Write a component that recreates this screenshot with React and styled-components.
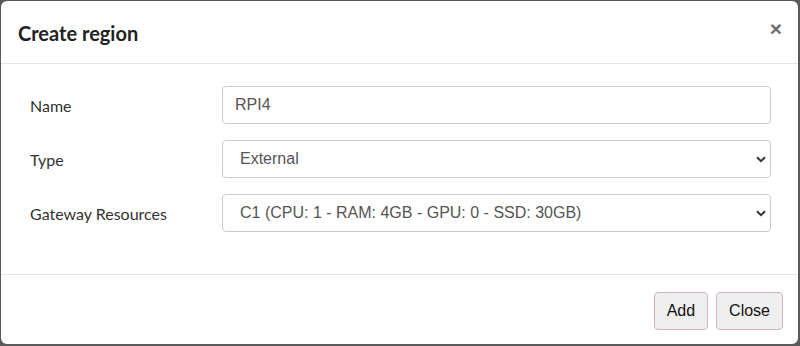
import React from "react";
import styled, { createGlobalStyle } from "styled-components";

const GlobalStyle = createGlobalStyle`
  html, body {
    margin: 0;
    padding: 0;
    background: #5a5a5a;
  }
  body {
    font-family: "Lato", "Liberation Sans", sans-serif;
  }
`;

const Backdrop = styled.div`
  width: 800px;
  height: 346px;
  padding: 1px 2px 2px 1px;
  box-sizing: border-box;
  background: #5a5a5a;
`;

const Modal = styled.div`
  height: 100%;
  background: #fff;
  border-radius: 6px;
  display: flex;
  flex-direction: column;
`;

const Header = styled.div`
  display: flex;
  align-items: center;
  justify-content: space-between;
  height: 62px;
  padding: 0 16px 0 17px;
  border-bottom: 1px solid #e5e5e5;
`;

const Title = styled.h4`
  margin: 0;
  font-family: "Lato", sans-serif;
  font-weight: 700;
  font-size: 20px;
  color: #222;
  padding-top: 1px;
`;

const CloseX = styled.button`
  border: none;
  background: none;
  padding: 0;
  font-family: "Liberation Sans", Arial, sans-serif;
  font-weight: 700;
  font-size: 21px;
  color: #6e6e6e;
  line-height: 1;
  margin-top: -8px;
  cursor: pointer;
`;

const Body = styled.div`
  flex: 1;
  padding: 22px 27px 0 29px;
  display: flex;
  flex-direction: column;
  gap: 16px;
`;

const Row = styled.div`
  display: grid;
  grid-template-columns: 192px 1fr;
  align-items: center;
`;

const Label = styled.label`
  font-family: "Lato", sans-serif;
  font-size: 16px;
  color: #333;
`;

const Field = styled.div`
  height: 38px;
  box-sizing: border-box;
  border: 1px solid #ccc;
  border-radius: 4px;
  display: flex;
  align-items: center;
  justify-content: space-between;
  padding: 0 ${p => (p.select ? "4px" : "12px")} 0 ${p => (p.select ? "17px" : "12px")};
  font-family: "Liberation Sans", Arial, sans-serif;
  font-size: 16px;
  color: #555;
`;

const Chevron = () => (
  <svg width="10" height="7" viewBox="0 0 10 7">
    <path d="M1 1.2 L5 5.2 L9 1.2" fill="none" stroke="#333" strokeWidth="2" />
  </svg>
);

const Footer = styled.div`
  height: 70px;
  box-sizing: border-box;
  border-top: 1px solid #e5e5e5;
  display: flex;
  align-items: center;
  justify-content: flex-end;
  gap: 8px;
  padding: 3px 15px 0 0;
`;

const Button = styled.button`
  height: 38px;
  padding: 0 12px;
  background: #efefef;
  border: 1px solid #cbb9b9;
  border-radius: 4px;
  font-family: "Liberation Sans", Arial, sans-serif;
  font-size: 16px;
  color: #111;
`;

export default function App() {
  return (
    <Backdrop>
      <GlobalStyle />
      <Modal>
        <Header>
          <Title>Create region</Title>
          <CloseX>×</CloseX>
        </Header>
        <Body>
          <Row>
            <Label>Name</Label>
            <Field>RPI4</Field>
          </Row>
          <Row>
            <Label>Type</Label>
            <Field select>
              <span>External</span>
              <Chevron />
            </Field>
          </Row>
          <Row>
            <Label>Gateway Resources</Label>
            <Field select>
              <span>C1 (CPU: 1 - RAM: 4GB - GPU: 0 - SSD: 30GB)</span>
              <Chevron />
            </Field>
          </Row>
        </Body>
        <Footer>
          <Button>Add</Button>
          <Button>Close</Button>
        </Footer>
      </Modal>
    </Backdrop>
  );
}
